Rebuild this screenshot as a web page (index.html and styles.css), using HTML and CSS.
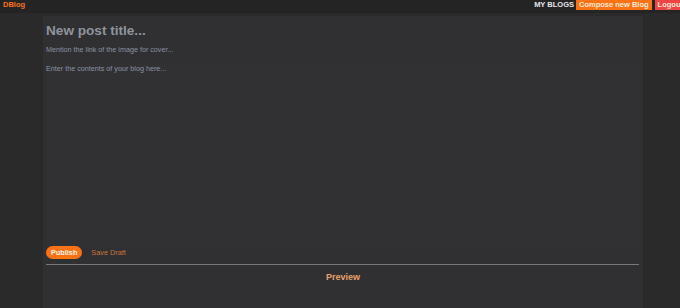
FILE: index.html
```html
<!DOCTYPE html>
<html>
<head>
<meta charset="utf-8">
<link rel="stylesheet" href="styles.css">
</head>
<body>
<nav class="nav">
  <span class="brand">DBlog</span>
  <div class="nav-links">
    <span class="nav-item">MY BLOGS</span>
    <span class="nav-btn compose">Compose new Blog</span>
    <span class="nav-btn logout">Logout</span>
  </div>
</nav>
<main class="editor">
  <div class="title">New post title...</div>
  <div class="cover">Mention the link of the image for cover...</div>
  <div class="content">Enter the contents of your blog here...</div>
  <div class="actions">
    <span class="publish">Publish</span>
    <span class="draft">Save Draft</span>
  </div>
  <hr class="divider">
  <div class="preview">Preview</div>
</main>
</body>
</html>
```
FILE: styles.css
```css
html, body { margin: 0; padding: 0; }
body {
  background: #2a2a2b;
  font-family: "Liberation Sans", Arial, sans-serif;
  height: 308px;
  overflow: hidden;
}
.nav {
  height: 13px;
  background: #242425;
  display: flex;
  justify-content: space-between;
  align-items: flex-start;
  padding-left: 3px;
}
.brand {
  color: #f97316;
  font-weight: bold;
  font-size: 7.5px;
  line-height: 10px;
}
.nav-links {
  display: flex;
  gap: 4px;
  margin-right: -6px;
}
.nav-item {
  color: #e5e7eb;
  font-weight: bold;
  font-size: 7.5px;
  line-height: 10px;
  margin-right: -2px;
}
.nav-btn {
  color: #fde8d8;
  font-weight: bold;
  font-size: 7.5px;
  line-height: 10px;
  padding: 0 3px;
}
.compose { background: #f97316; }
.logout { background: #ef4444; margin-left: -1px; }
.editor {
  margin: 3px 0 0 43px;
  width: 600px;
  height: 292px;
  background: #303032;
  display: flex;
  flex-direction: column;
  padding: 0 3px;
  box-sizing: border-box;
}
.title {
  color: #8f949c;
  font-weight: bold;
  font-size: 13.6px;
  line-height: 18px;
  margin-top: 6px;
}
.cover {
  color: #8a93a3;
  font-size: 7.2px;
  line-height: 10px;
  margin-top: 5px;
}
.content {
  color: #8a93a3;
  font-size: 7.2px;
  line-height: 10px;
  margin-top: 9px;
  height: 182px;
  background: #313133;
}
.actions {
  display: flex;
  align-items: center;
  gap: 9px;
  margin-top: 0;
}
.publish {
  background: #f97316;
  color: #fff3ea;
  font-weight: bold;
  font-size: 7.3px;
  line-height: 13px;
  padding: 0 5px;
  border-radius: 7px;
}
.draft {
  color: #c8743a;
  font-size: 7.3px;
}
.divider {
  border: 0;
  border-top: 1px solid #7a7a7a;
  margin: 5px 1px 0 0;
  width: 593px;
}
.preview {
  text-align: center;
  color: #e8a06b;
  font-weight: bold;
  font-size: 9px;
  margin-top: 7px;
}
```
